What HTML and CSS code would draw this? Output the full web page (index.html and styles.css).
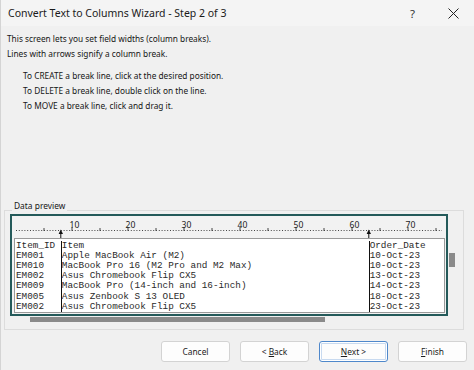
FILE: index.html
```html
<!DOCTYPE html>
<html lang="en">
<head>
  <meta charset="UTF-8">
  <meta name="viewport" content="width=device-width, initial-scale=1.0">
  <title>Convert Text to Columns Wizard - Step 2 of 3</title>
  <link rel="stylesheet" href="styles.css">
</head>
<body>
  <div class="window">
    <div class="titlebar">
      <span class="title">Convert Text to Columns Wizard - Step 2 of 3</span>
      <span class="help">?</span>
      <span class="close">
        <svg width="11" height="11" viewBox="0 0 11 11"><path d="M0.5 0.5L10.5 10.5M10.5 0.5L0.5 10.5" stroke="#222" stroke-width="1"/></svg>
      </span>
    </div>

    <div class="content">
      <p class="intro">This screen lets you set field widths (column breaks).<br>Lines with arrows signify a column break.</p>
      <ul class="hints">
        <li>To CREATE a break line, click at the desired position.</li>
        <li>To DELETE a break line, double click on the line.</li>
        <li>To MOVE a break line, click and drag it.</li>
      </ul>

      <div class="group">
        <div class="group-label">Data <u>p</u>review</div>
        <div class="preview-row">
          <div class="preview">
            <svg class="ruler" width="431" height="22" viewBox="0 0 431 22">
              <line x1="2" y1="14.5" x2="428" y2="14.5" stroke="#444" stroke-width="1" stroke-dasharray="1 1.8"/>
              <path d="M30 12v3M58 11v4M86 12v3M114 11v4M142 12v3M170 11v4M198 12v3M226 11v4M254 12v3M282 11v4M310 12v3M338 11v4M366 12v3M394 11v4M422 12v3" stroke="#444" stroke-width="1"/>
              <g class="ruler-num" text-anchor="middle">
                <text x="60.5" y="11.5">10</text>
                <text x="116.5" y="11.5">20</text>
                <text x="172.5" y="11.5">30</text>
                <text x="228.5" y="11.5">40</text>
                <text x="284.5" y="11.5">50</text>
                <text x="340.5" y="11.5">60</text>
                <text x="396.5" y="11.5">70</text>
              </g>
              <polygon points="46.8,13.5 44.6,18 49,18" fill="#111"/>
              <line x1="46.8" y1="17" x2="46.8" y2="22" stroke="#111" stroke-width="1"/>
              <polygon points="354.8,13.5 352.6,18 357,18" fill="#111"/>
              <line x1="354.8" y1="17" x2="354.8" y2="22" stroke="#111" stroke-width="1"/>
            </svg>
            <div class="data">
              <span>Item_ID</span><span class="brk">Item</span><span class="brk">Order_Date</span>
              <span>EM001</span><span class="brk">Apple MacBook Air (M2)</span><span class="brk">10-Oct-23</span>
              <span>EM010</span><span class="brk">MacBook Pro 16 (M2 Pro and M2 Max)</span><span class="brk">10-Oct-23</span>
              <span>EM002</span><span class="brk">Asus Chromebook Flip CX5</span><span class="brk">13-Oct-23</span>
              <span>EM009</span><span class="brk">MacBook Pro (14-inch and 16-inch)</span><span class="brk">14-Oct-23</span>
              <span>EM005</span><span class="brk">Asus Zenbook S 13 OLED</span><span class="brk">18-Oct-23</span>
              <span>EM002</span><span class="brk">Asus Chromebook Flip CX5</span><span class="brk">23-Oct-23</span>
            </div>
          </div>
          <div class="vscroll"><div class="vthumb"></div></div>
        </div>
        <div class="hthumb"></div>
      </div>
    </div>

    <div class="buttons">
      <button class="btn">Cancel</button>
      <button class="btn">&lt; <u>B</u>ack</button>
      <button class="btn default"><u>N</u>ext &gt;</button>
      <button class="btn"><u>F</u>inish</button>
    </div>
  </div>
</body>
</html>
```

FILE: styles.css
```css
body {
  margin: 0;
  padding: 0;
  background: #f0f0f0;
  font-family: "Noto Sans", "Open Sans", sans-serif;
  color: #161616;
}
.window {
  width: 474px;
  height: 370px;
  background: #f0f0f0;
  border-left: 1px solid #d4d4d4;
  box-sizing: border-box;
  overflow: hidden;
}
.titlebar {
  display: flex;
  align-items: center;
  height: 26px;
  padding-left: 7px;
  background: #f4f4f4;
}
.title {
  flex: 1;
  font-size: 10.5px;
  color: #1a1a1a;
}
.help {
  font-size: 11.5px;
  color: #333;
  width: 38px;
}
.close {
  width: 26px;
  display: flex;
}
.content {
  padding-top: 5px;
}
.intro {
  margin: 0;
  padding-left: 6px;
  font-size: 8.3px;
  line-height: 15px;
}
.hints {
  list-style: none;
  margin: 7px 0 0;
  padding-left: 22px;
  font-size: 8.3px;
  line-height: 15px;
}
.group {
  margin: 97px 10px 0 3px;
  border: 1px solid #dcdcdc;
  padding: 0 6px 7px 5px;
  display: flex;
  flex-direction: column;
}
.group-label {
  align-self: flex-start;
  margin: -12px 0 0 2px;
  padding: 0 2px;
  background: #f0f0f0;
  font-size: 8.4px;
  line-height: 14px;
}
.group-label u {
  text-decoration: none;
}
.preview-row {
  display: flex;
  margin-top: 1px;
}
.preview {
  width: 438px;
  box-sizing: border-box;
  border: 2px solid #245a5a;
  padding: 0 1px 1px 2px;
  background: #f2f2f2;
}
.ruler {
  display: block;
}
.ruler-num {
  font-family: "Noto Sans", sans-serif;
  font-size: 8.6px;
  fill: #222;
}
.data {
  display: grid;
  grid-template-columns: 8ch 55ch 1fr;
  height: 75px;
  box-sizing: border-box;
  border: 1px solid #9a9a9a;
  padding: 1.5px 0 0 1px;
  background: #fff;
  font-family: "Liberation Mono", monospace;
  font-size: 9.33px;
  line-height: 10.2px;
  color: #2a2a2a;
  white-space: pre;
}
.data .brk {
  border-left: 1px solid #111;
}
.vscroll {
  width: 7px;
  margin-left: 1px;
}
.vthumb {
  margin-top: 39px;
  width: 6px;
  height: 14px;
  background: #8a8a8a;
}
.hthumb {
  margin: 1px 0 0 20px;
  width: 295px;
  height: 5px;
  background: #8a8a8a;
}
.buttons {
  display: flex;
  justify-content: flex-end;
  gap: 10px;
  margin-top: 11px;
  padding-right: 7px;
}
.btn {
  width: 69px;
  height: 21px;
  padding: 0;
  background: #fdfdfd;
  border: 1px solid #d3d3d3;
  border-radius: 3px;
  font-family: "Noto Sans", sans-serif;
  font-size: 8.4px;
  color: #1b1b1b;
}
.btn.default {
  border-color: #4f88cb;
  box-shadow: inset 0 0 0 1px #fff, inset 0 0 0 2px #c8daf0;
}
```
